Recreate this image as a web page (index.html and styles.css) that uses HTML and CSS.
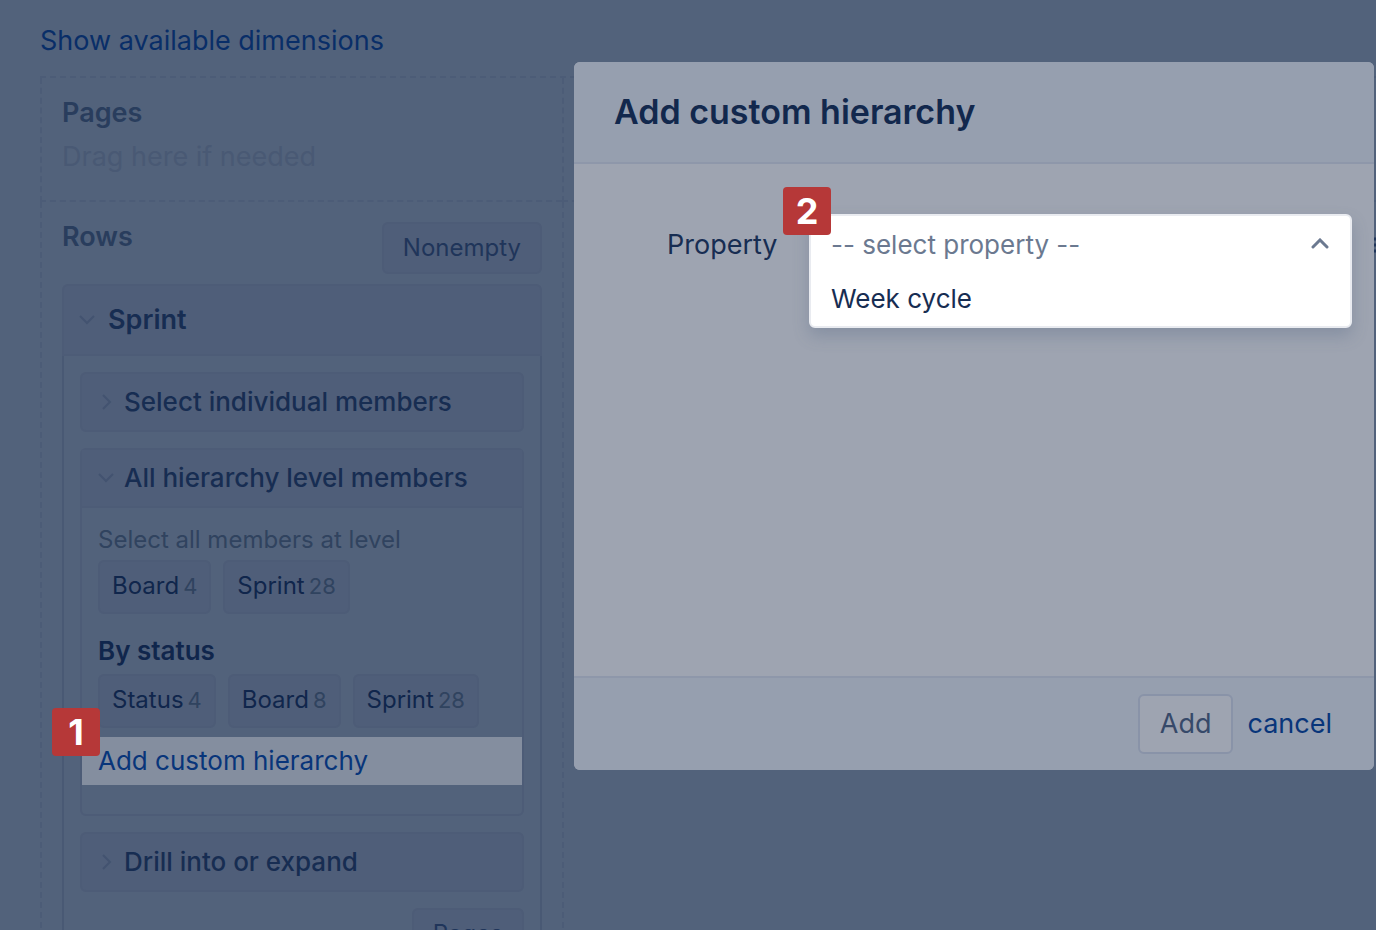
FILE: index.html
```
<!DOCTYPE html>
<html lang="en">
  <head>
    <meta charset="UTF-8" />
    <title>Add custom hierarchy</title>
    <link rel="stylesheet" href="styles.css">
  </head>

  <body>
    <main class="analyze">
      <a href="#" class="show-dimensions">Show available dimensions</a>

      <div class="dimensions">
        <section class="area pages">
          <h2>Pages</h2>
          <p class="hint">Drag here if needed</p>
        </section>
        <section class="area"></section>

        <section class="area rows">
          <div class="area-header">
            <h2>Rows</h2>
            <button class="btn nonempty">Nonempty</button>
          </div>

          <div class="dimension">
            <h3 class="dimension-title">
              <svg class="chevron" viewBox="0 0 16 16"><path d="M1 4l7 7 7-7" /></svg>
              Sprint
            </h3>
            <div class="dimension-body">
              <h4 class="panel panel-title">
                <svg class="chevron" viewBox="0 0 16 16"><path d="M5 1l7 7-7 7" /></svg>
                Select individual members
              </h4>

              <div class="panel">
                <h4 class="panel-title open">
                  <svg class="chevron" viewBox="0 0 16 16"><path d="M1 4l7 7 7-7" /></svg>
                  All hierarchy level members
                </h4>
                <div class="panel-body">
                  <p class="level-hint">Select all members at level</p>
                  <div class="levels">
                    <button class="level">Board<small>4</small></button>
                    <button class="level">Sprint<small>28</small></button>
                  </div>
                  <h5>By status</h5>
                  <div class="levels">
                    <button class="level">Status<small>4</small></button>
                    <button class="level">Board<small>8</small></button>
                    <button class="level">Sprint<small>28</small></button>
                  </div>
                  <div class="add-hierarchy">
                    <a href="#">Add custom hierarchy</a>
                    <span class="step">1</span>
                  </div>
                </div>
              </div>

              <h4 class="panel panel-title">
                <svg class="chevron" viewBox="0 0 16 16"><path d="M5 1l7 7-7 7" /></svg>
                Drill into or expand
              </h4>

              <button class="btn move">Pages</button>
            </div>
          </div>
        </section>
        <section class="area columns">
          <svg class="handle" viewBox="0 0 12 16"><path d="M0 2h12M0 8h12M0 14h12" /></svg>
        </section>
      </div>
    </main>

    <div class="dialog" role="dialog" aria-labelledby="dialog-title">
      <header>
        <h1 id="dialog-title">Add custom hierarchy</h1>
      </header>
      <form class="dialog-body">
        <label for="property">Property</label>
        <div class="dropdown">
          <select id="property">
            <option>-- select property --</option>
            <option>Week cycle</option>
          </select>
          <svg class="arrow" viewBox="0 0 20 12"><path d="M3 9l7-7 7 7" /></svg>
          <ul class="options">
            <li>Week cycle</li>
          </ul>
          <span class="step">2</span>
        </div>
      </form>
      <footer>
        <button class="add">Add</button>
        <a href="#">cancel</a>
      </footer>
    </div>
  </body>
</html>
```
FILE: styles.css
```
* {
  box-sizing: border-box;
  margin: 0;
  padding: 0;
}

body {
  height: 100vh;
  overflow: hidden;
  background: #52627b;
  color: #172d52;
  font-family: Inter, "Liberation Sans", sans-serif;
  font-size: 27px;
  line-height: 32px;
}

a {
  color: #08357a;
  text-decoration: none;
}

button,
select {
  font: inherit;
  color: inherit;
}

h1,
h2,
h3,
h4,
h5 {
  font-size: 27px;
  font-weight: 600;
}

/* report dimensions */
.analyze {
  padding: 25px 0 0 40px;
}

.show-dimensions {
  display: block;
  margin-bottom: 19px;
  color: #092e68;
}

.dimensions {
  display: grid;
  grid-template-columns: 522px 1fr;
  border-top: 2px dashed #4c5c77;
}

.area {
  padding: 20px;
  border-left: 2px dashed #4c5c77;
  border-bottom: 2px dashed #4c5c77;
}

.pages {
  height: 124px;
}

.area h2 {
  color: #293d5d;
  line-height: 30px;
}

.hint {
  margin-top: 13px;
  color: #495974;
}

.area-header {
  display: flex;
  justify-content: space-between;
  margin-bottom: 10px;
}

.columns {
  padding: 35px 0;
  text-align: right;
}

.handle {
  display: inline-block;
  width: 12px;
  height: 16px;
  vertical-align: top;
  stroke: #20355a;
  stroke-width: 3;
}

.btn {
  height: 52px;
  padding: 0 19px;
  border: 2px solid #4d5c77;
  border-radius: 6px;
  background: #4f5e79;
  color: #20355a;
  font-size: 24px;
}

.dimension-title {
  display: flex;
  align-items: center;
  gap: 13px;
  height: 72px;
  padding: 0 15px;
  border: 2px solid #4d5c77;
  border-radius: 6px 6px 0 0;
  background: #4f5e79;
}

.chevron {
  width: 16px;
  height: 16px;
  fill: none;
  stroke: #435370;
  stroke-width: 2;
}

.dimension-body {
  display: flex;
  flex-direction: column;
  gap: 16px;
  padding: 16px;
  border: solid #495974;
  border-width: 0 2px;
}

.panel {
  border: 2px solid #4d5c77;
  border-radius: 6px;
}

.panel-title {
  display: flex;
  align-items: center;
  gap: 10px;
  height: 60px;
  padding: 0 16px;
  background: #4f5e79;
  font-size: 26px;
  font-weight: 500;
}

.panel-title.open {
  height: 58px;
  border-bottom: 2px solid #4d5c77;
}

.panel-body {
  padding: 16px 16px 29px;
}

.level-hint {
  margin-bottom: 4px;
  color: #30435f;
  font-size: 24px;
}

.levels {
  display: flex;
  gap: 12px;
}

.level {
  height: 54px;
  padding: 0 12px 2px;
  border: 2px solid #4d5c77;
  border-radius: 6px;
  background: #4f5e79;
  color: #10264c;
  font-size: 24px;
}

.level small {
  margin-left: 4px;
  color: #30435f;
  font-size: 22px;
}

.panel-body h5 {
  margin: 21px 0 7px;
  color: #10264c;
  font-size: 26px;
}

.add-hierarchy {
  position: relative;
  margin: 9px -16px 0;
  padding: 8px 16px;
  background: #848e9f;
  font-size: 26px;
}

.step {
  position: absolute;
  width: 48px;
  height: 48px;
  border-radius: 4px;
  background: #b63838;
  color: #fff;
  font-size: 36px;
  font-weight: 700;
  line-height: 48px;
  text-align: center;
}

.add-hierarchy .step {
  top: -29px;
  left: -30px;
}

.move {
  align-self: flex-end;
}

/* dialog */
.dialog {
  position: absolute;
  top: 62px;
  right: 2px;
  width: 800px;
  border-radius: 6px;
  background: #9ea4b1;
}

.dialog header {
  padding: 30px 40px;
  border-bottom: 2px solid #8e97aa;
  border-radius: 6px 6px 0 0;
  background: #969faf;
}

.dialog h1 {
  color: #12284d;
  font-size: 34px;
  line-height: 40px;
}

.dialog-body {
  display: flex;
  gap: 30px;
  height: 512px;
  padding: 50px 22px 0 93px;
}

.dialog-body label {
  width: 112px;
  padding-top: 15px;
}

.dropdown {
  position: relative;
  flex: 1;
  height: 114px;
  border: 2px solid #e9ebf0;
  border-radius: 6px;
  background: #fff;
  box-shadow: 0 8px 16px rgba(80, 99, 130, 0.3);
}

.dropdown select {
  width: 100%;
  height: 58px;
  padding: 0 20px;
  border: 0;
  appearance: none;
  background: none;
  color: #6b7990;
  font-size: 26px;
}

.arrow {
  position: absolute;
  top: 22px;
  right: 20px;
  width: 20px;
  height: 12px;
  fill: none;
  stroke: #6b7990;
  stroke-width: 3;
  stroke-linecap: round;
}

.options {
  padding: 9px 20px;
  list-style: none;
  font-size: 26px;
}

.dropdown .step {
  top: -29px;
  left: -28px;
}

.dialog footer {
  display: flex;
  justify-content: flex-end;
  align-items: center;
  gap: 14px;
  padding: 16px 42px 16px 0;
  border-top: 2px solid #8e97aa;
  border-radius: 0 0 6px 6px;
  background: #969faf;
}

.add {
  height: 60px;
  padding: 0 20px;
  border: 2px solid #8993a8;
  border-radius: 6px;
  background: #9ea4b1;
  color: #364969;
}
```
